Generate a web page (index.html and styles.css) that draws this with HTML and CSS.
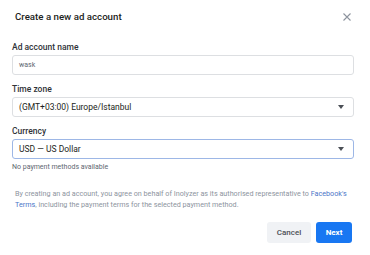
FILE: index.html
```html
<!DOCTYPE html>
<html>
<head>
<meta charset="utf-8">
<link rel="stylesheet" href="styles.css">
</head>
<body>
<div class="dialog">
  <div class="header">
    <div class="title">Create a new ad account</div>
    <svg class="close" width="8" height="8" viewBox="0 0 8 8"><path d="M0.5 0.5L7.5 7.5M7.5 0.5L0.5 7.5" stroke="#8d949e" stroke-width="1.1" fill="none"/></svg>
  </div>
  <div class="field">
    <div class="label">Ad account name</div>
    <div class="box"><span class="value muted">wask</span></div>
  </div>
  <div class="field">
    <div class="label">Time zone</div>
    <div class="box"><span class="value">(GMT+03:00) Europe/Istanbul</span><span class="caret"></span></div>
  </div>
  <div class="field">
    <div class="label">Currency</div>
    <div class="box focus"><span class="value">USD — US Dollar</span><span class="caret"></span></div>
  </div>
  <div class="note">No payment methods available</div>
  <p class="terms">By creating an ad account, you agree on behalf of Inolyzer as its authorised representative to <span class="link">Facebook's</span><br><span class="link">Terms</span>, including the payment terms for the selected payment method.</p>
  <div class="actions">
    <div class="btn cancel">Cancel</div>
    <div class="btn next">Next</div>
  </div>
</div>
</body>
</html>
```
FILE: styles.css
```css
html, body {
  margin: 0;
  padding: 0;
  background: #ffffff;
}
body {
  font-family: Roboto, "Liberation Sans", Arial, sans-serif;
  color: #1c1e21;
}
.dialog {
  width: 370px;
  height: 255px;
  box-sizing: border-box;
  padding: 11px 16px 0 12px;
}
.header {
  display: flex;
  align-items: center;
  justify-content: space-between;
  height: 12px;
  padding-left: 3px;
  padding-right: 3px;
  margin-bottom: 18px;
}
.title {
  font-size: 9.7px;
  font-weight: 500;
  line-height: 12px;
  color: #1c1e21;
}
.close {
  display: block;
}
.field {
  margin-bottom: 8px;
}
.label {
  font-size: 8.5px;
  font-weight: 500;
  line-height: 12px;
  color: #303338;
  margin-bottom: 2px;
}
.box {
  height: 20px;
  box-sizing: border-box;
  border: 1px solid #dddfe2;
  border-radius: 3px;
  display: flex;
  align-items: center;
  justify-content: space-between;
  padding: 0 9px 0 6px;
}
.box.focus {
  border-color: #9db7e6;
}
.value {
  font-size: 8.5px;
  color: #1c1e21;
}
.value.muted {
  font-size: 7px;
  color: #606770;
}
.caret {
  width: 0;
  height: 0;
  border-left: 3.5px solid transparent;
  border-right: 3.5px solid transparent;
  border-top: 4px solid #4b4f56;
}
.note {
  font-size: 7px;
  line-height: 10px;
  color: #606770;
  margin-top: -5px;
}
.terms {
  margin: 16px 0 0 3px;
  font-size: 7.2px;
  line-height: 11px;
  color: #8d949e;
  width: 340px;
}
.link {
  color: #4a76c8;
}
.actions {
  display: flex;
  justify-content: flex-end;
  gap: 5px;
  margin-top: 12px;
  padding-right: 2px;
}
.btn {
  height: 21px;
  border-radius: 3px;
  display: flex;
  align-items: center;
  justify-content: center;
  font-size: 8px;
  font-weight: 500;
}
.cancel {
  width: 44px;
  background: #f0f2f5;
  color: #4b4f56;
}
.next {
  width: 36px;
  background: #1877f2;
  color: #ffffff;
  font-weight: 700;
}
```
